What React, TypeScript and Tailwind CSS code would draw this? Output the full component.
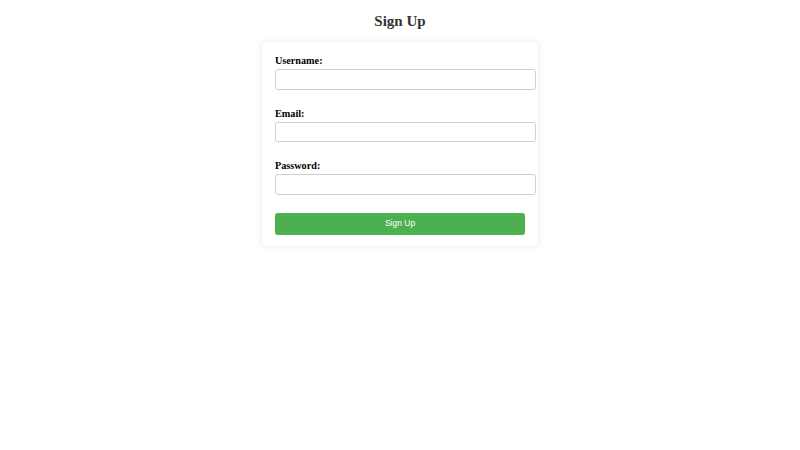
import React from 'react';

const FIELDS = [
  { label: 'Username:', type: 'text' },
  { label: 'Email:', type: 'email' },
  { label: 'Password:', type: 'password' }
];

export default function App() {
  return (
    <div className="min-h-screen w-full bg-white flex flex-col items-center" style={{ fontFamily: '"Liberation Serif", serif' }}>
      <h2 className="pt-[13px] text-[15px] leading-[17px] font-bold text-[#333]">Sign Up</h2>

      <form
        className="mt-[12px] w-[276px] px-[13px] pt-[13px] pb-[11.5px] bg-white rounded-[3px] shadow-[0_0_6px_rgba(0,0,0,0.1)]"
        onSubmit={(e) => e.preventDefault()}>
        {FIELDS.map((f) =>
        <div key={f.label} className="mb-[18px]">
            <label className="block text-[10.2px] leading-[12px] font-bold text-black mb-[2px]">
              {f.label}
            </label>
            <input
            type={f.type}
            className="block w-[261px] h-[20.5px] border border-[#cfcfcf] rounded-[3px] bg-white outline-none" />
          </div>
        )}

        <button
          type="submit"
          className="block w-[250px] h-[22px] rounded-[3px] bg-[#4caf50] text-white text-[8.5px]"
          style={{ fontFamily: '"Liberation Sans", Arial, sans-serif' }}>
          Sign Up
        </button>
      </form>
    </div>);

}
